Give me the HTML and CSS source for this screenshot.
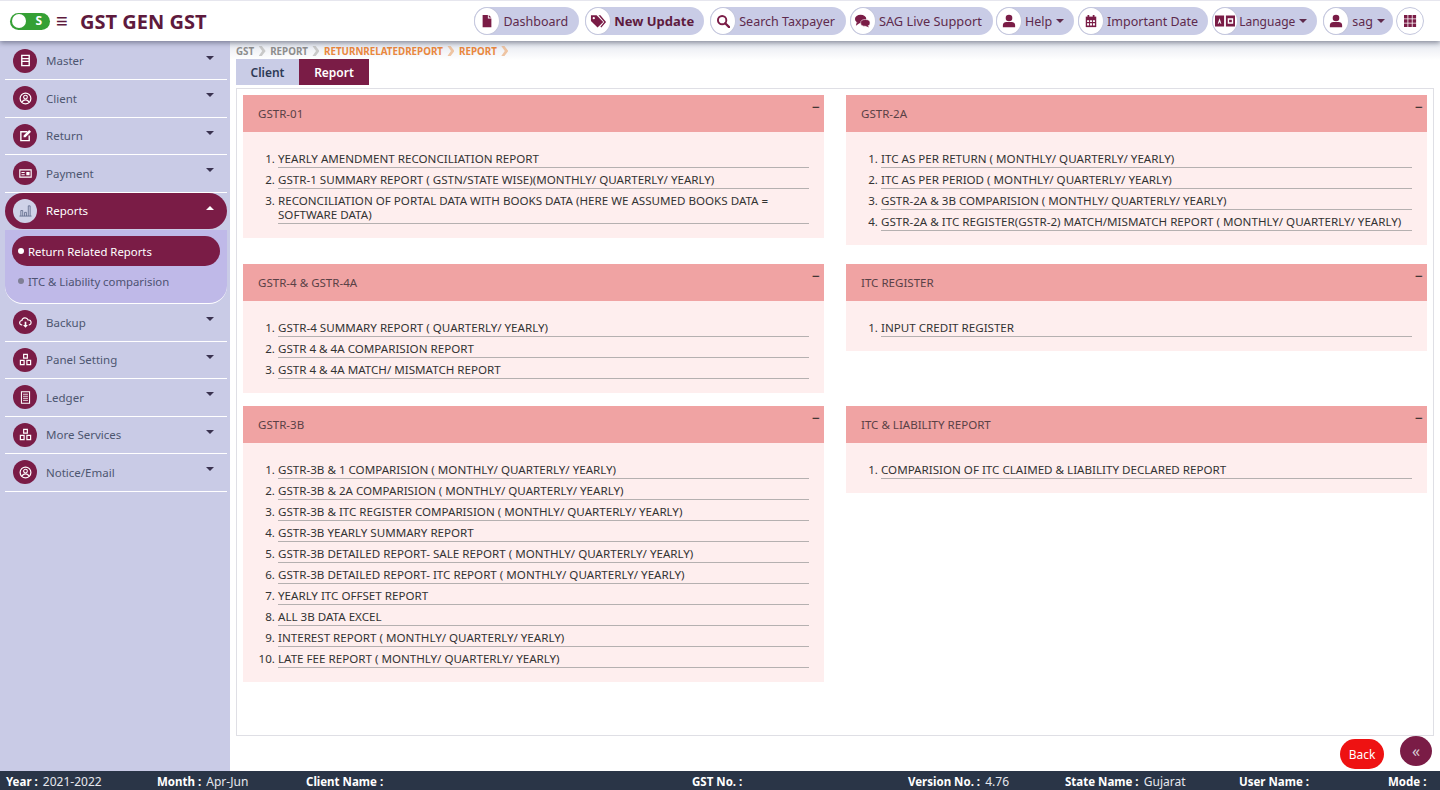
FILE: index.html
```html
<!DOCTYPE html>
<html lang="en">
<head>
<meta charset="utf-8">
<title>GST GEN GST</title>
<link rel="stylesheet" href="styles.css">
</head>
<body>
<svg class="defs" width="0" height="0" aria-hidden="true">
  <symbol id="i-file" viewBox="0 0 16 16"><path fill="currentColor" d="M3 1h6v4h4v10H3z M10 1l3 3h-3z"/></symbol>
  <symbol id="i-tags" viewBox="0 0 18 16"><path fill="currentColor" d="M1 2h6l7 7-6 6-7-7z M9 2h2l6 7-5 6-1-1 4-5z"/><circle cx="4" cy="5" r="1.2" fill="#fff"/></symbol>
  <symbol id="i-search" viewBox="0 0 16 16"><circle cx="7" cy="7" r="4.8" fill="none" stroke="currentColor" stroke-width="2.2"/><path d="M10.5 10.5 15 15" stroke="currentColor" stroke-width="2.6" stroke-linecap="round"/></symbol>
  <symbol id="i-chat" viewBox="0 0 18 16"><ellipse cx="7" cy="6" rx="6" ry="4.5" fill="currentColor"/><path fill="currentColor" d="M3 9 2 13l4-3z"/><ellipse cx="12" cy="10" rx="5" ry="3.6" fill="currentColor" stroke="#fff" stroke-width=".6"/><path fill="currentColor" d="M14 12l2 3-4-2z"/></symbol>
  <symbol id="i-user" viewBox="0 0 16 16"><circle cx="8" cy="4.6" r="3.8" fill="currentColor"/><path fill="currentColor" d="M1 15v-2.5C1 10 3 9 5 9h6c2 0 4 1 4 3.500V15z"/></symbol>
  <symbol id="i-cal" viewBox="0 0 16 16"><path fill="currentColor" d="M2 3h12v12H2z"/><path stroke="currentColor" stroke-width="2" d="M5 1v3M11 1v3"/><path fill="#fff" d="M3.500 7h2.300v2H3.500zM6.900 7h2.200v2H6.900zM10.200 7h2.300v2h-2.300zM3.500 10.500h2.300v2.500H3.500zM6.900 10.500h2.200v2.500H6.900zM10.200 10.500h2.300v2.500h-2.300z"/></symbol>
  <symbol id="i-lang" viewBox="0 0 22 14"><path fill="currentColor" fill-rule="evenodd" d="M0 1h10v12H0zM3 10l2-6 2 6-1 0-.4-1.400H4.400L4 10zM12 1h10v12H12zM14 4v6h6V4zM15.500 5.500h3v3h-3z"/></symbol>
  <symbol id="i-grid" viewBox="0 0 14 14"><path fill="currentColor" d="M1 1h3.500v3.500H1zM5.300 1h3.500v3.500H5.300zM9.600 1h3.500v3.500H9.600zM1 5.300h3.500v3.500H1zM5.300 5.300h3.500v3.500H5.300zM9.600 5.300h3.500v3.500H9.600zM1 9.600h3.500v3.500H1zM5.300 9.600h3.500v3.500H5.300zM9.600 9.600h3.500v3.500H9.600z"/></symbol>
  <symbol id="i-master" viewBox="0 0 14 14"><path fill="none" stroke="currentColor" stroke-width="1.500" d="M3 1.500h8v11H3z"/><path stroke="currentColor" stroke-width="1.300" d="M3 5h8M3 8h8"/></symbol>
  <symbol id="i-client" viewBox="0 0 14 14"><circle cx="7" cy="7" r="5.800" fill="none" stroke="currentColor" stroke-width="1.300"/><circle cx="7" cy="5.500" r="2" fill="none" stroke="currentColor" stroke-width="1.200"/><path fill="none" stroke="currentColor" stroke-width="1.200" d="M3.500 11c.5-2 2-2.500 3.500-2.500s3 .5 3.500 2.500"/></symbol>
  <symbol id="i-return" viewBox="0 0 14 14"><path fill="none" stroke="currentColor" stroke-width="1.500" d="M9 3H2v9.500h9V7"/><path fill="currentColor" d="M5 7l6-6 2 2-6 6H5z"/></symbol>
  <symbol id="i-pay" viewBox="0 0 16 12"><path fill="none" stroke="currentColor" stroke-width="1.400" d="M1 1.500h14v9H1z"/><path fill="currentColor" d="M3 4h4v1.300H3zM3 7h4v1.300H3zM9 4h4v4.300H9z"/></symbol>
  <symbol id="i-chart" viewBox="0 0 14 14"><path fill="none" stroke="currentColor" stroke-width=".9" d="M.5 13h13M2 13V7h2v6M6 13V9h2v4M10 13V2h2v11"/></symbol>
  <symbol id="i-cloud" viewBox="0 0 16 14"><path fill="none" stroke="currentColor" stroke-width="1.400" d="M4 10H3.500a2.700 2.700 0 0 1 0-5.400A4 4 0 0 1 11.200 4 3 3 0 0 1 12.500 10H12"/><path fill="currentColor" d="M7 6h2v4h2l-3 3.500L5 10h2z"/></symbol>
  <symbol id="i-panel" viewBox="0 0 14 14"><g fill="none" stroke="currentColor" stroke-width="1.300"><path d="M5 1.500h4v4H5z"/><path d="M1.500 8h4v4.500h-4z"/><path d="M8.500 8h4v4.500h-4z"/></g></symbol>
  <symbol id="i-ledger" viewBox="0 0 12 16"><path fill="none" stroke="currentColor" stroke-width="1.300" d="M1 1h10v14H1z"/><path stroke="currentColor" d="M3 4h6M3 6.500h6M3 9h6M3 11.500h6"/></symbol>
</svg>

<header class="topbar">
  <div class="brand">
    <span class="toggle"><span class="knob"></span><span class="toggle-s">S</span></span>
    <span class="burger">≡</span>
    <span class="title">GST GEN GST</span>
  </div>
  <nav class="topnav">
    <a class="pill p-dash"><span class="ico"><svg class="s13"><use href="#i-file"/></svg></span>Dashboard</a>
    <a class="pill p-new strong"><span class="ico"><svg class="s16"><use href="#i-tags"/></svg></span>New Update</a>
    <a class="pill p-search"><span class="ico"><svg class="s13"><use href="#i-search"/></svg></span>Search Taxpayer</a>
    <a class="pill p-sag"><span class="ico"><svg class="s16"><use href="#i-chat"/></svg></span>SAG Live Support</a>
    <a class="pill p-help"><span class="ico"><svg class="s13"><use href="#i-user"/></svg></span>Help<i class="caret"></i></a>
    <a class="pill p-date"><span class="ico"><svg class="s13"><use href="#i-cal"/></svg></span>Important Date</a>
    <a class="pill p-lang"><span class="ico"><svg class="s18"><use href="#i-lang"/></svg></span>Language<i class="caret"></i></a>
    <a class="pill p-user"><span class="ico"><svg class="s13"><use href="#i-user"/></svg></span>sag<i class="caret"></i></a>
    <a class="ico solo"><svg class="s13"><use href="#i-grid"/></svg></a>
  </nav>
</header>

<div class="shell">
  <aside class="sidebar">
    <div class="side-item"><span class="badge"><svg class="s12"><use href="#i-master"/></svg></span><span class="side-label">Master</span><i class="tri"></i></div>
    <div class="side-item"><span class="badge"><svg class="s12"><use href="#i-client"/></svg></span><span class="side-label">Client</span><i class="tri"></i></div>
    <div class="side-item"><span class="badge"><svg class="s12"><use href="#i-return"/></svg></span><span class="side-label">Return</span><i class="tri"></i></div>
    <div class="side-item"><span class="badge"><svg class="s12"><use href="#i-pay"/></svg></span><span class="side-label">Payment</span><i class="tri"></i></div>
    <div class="side-item open"><span class="badge"><svg class="s12"><use href="#i-chart"/></svg></span><span class="side-label">Reports</span><i class="tri up"></i></div>
    <div class="submenu">
      <div class="sub active"><i class="dot"></i>Return Related Reports</div>
      <div class="sub"><i class="dot"></i>ITC &amp; Liability comparision</div>
    </div>
    <div class="side-item"><span class="badge"><svg class="s12"><use href="#i-cloud"/></svg></span><span class="side-label">Backup</span><i class="tri"></i></div>
    <div class="side-item"><span class="badge"><svg class="s12"><use href="#i-panel"/></svg></span><span class="side-label">Panel Setting</span><i class="tri"></i></div>
    <div class="side-item"><span class="badge"><svg class="s12"><use href="#i-ledger"/></svg></span><span class="side-label">Ledger</span><i class="tri"></i></div>
    <div class="side-item"><span class="badge"><svg class="s12"><use href="#i-panel"/></svg></span><span class="side-label">More Services</span><i class="tri"></i></div>
    <div class="side-item"><span class="badge"><svg class="s12"><use href="#i-client"/></svg></span><span class="side-label">Notice/Email</span><i class="tri"></i></div>
  </aside>

  <main class="main">
    <div class="crumbs">
      <span>GST</span><i class="chev"></i><span>REPORT</span><i class="chev"></i><span class="hot">RETURNRELATEDREPORT</span><i class="chev"></i><span class="hot">REPORT</span><i class="chev"></i>
    </div>
    <div class="tabs">
      <a class="tab">Client</a>
      <a class="tab current">Report</a>
    </div>
    <div class="board">
      <div class="panel-grid">
        <section class="panel">
          <h3 class="panel-head">GSTR-01<span class="minus">−</span></h3>
          <ol class="panel-list">
            <li>YEARLY AMENDMENT RECONCILIATION REPORT</li>
            <li>GSTR-1 SUMMARY REPORT ( GSTN/STATE WISE)(MONTHLY/ QUARTERLY/ YEARLY)</li>
            <li>RECONCILIATION OF PORTAL DATA WITH BOOKS DATA (HERE WE ASSUMED BOOKS DATA = SOFTWARE DATA)</li>
          </ol>
        </section>
        <section class="panel first-row">
          <h3 class="panel-head">GSTR-2A<span class="minus">−</span></h3>
          <ol class="panel-list">
            <li>ITC AS PER RETURN ( MONTHLY/ QUARTERLY/ YEARLY)</li>
            <li>ITC AS PER PERIOD ( MONTHLY/ QUARTERLY/ YEARLY)</li>
            <li>GSTR-2A &amp; 3B COMPARISION ( MONTHLY/ QUARTERLY/ YEARLY)</li>
            <li>GSTR-2A &amp; ITC REGISTER(GSTR-2) MATCH/MISMATCH REPORT ( MONTHLY/ QUARTERLY/ YEARLY)</li>
          </ol>
        </section>
        <section class="panel">
          <h3 class="panel-head">GSTR-4 &amp; GSTR-4A<span class="minus">−</span></h3>
          <ol class="panel-list">
            <li>GSTR-4 SUMMARY REPORT ( QUARTERLY/ YEARLY)</li>
            <li>GSTR 4 &amp; 4A COMPARISION REPORT</li>
            <li>GSTR 4 &amp; 4A MATCH/ MISMATCH REPORT</li>
          </ol>
        </section>
        <section class="panel">
          <h3 class="panel-head">ITC REGISTER<span class="minus">−</span></h3>
          <ol class="panel-list">
            <li>INPUT CREDIT REGISTER</li>
          </ol>
        </section>
        <section class="panel">
          <h3 class="panel-head">GSTR-3B<span class="minus">−</span></h3>
          <ol class="panel-list">
            <li>GSTR-3B &amp; 1 COMPARISION ( MONTHLY/ QUARTERLY/ YEARLY)</li>
            <li>GSTR-3B &amp; 2A COMPARISION ( MONTHLY/ QUARTERLY/ YEARLY)</li>
            <li>GSTR-3B &amp; ITC REGISTER COMPARISION ( MONTHLY/ QUARTERLY/ YEARLY)</li>
            <li>GSTR-3B YEARLY SUMMARY REPORT</li>
            <li>GSTR-3B DETAILED REPORT- SALE REPORT ( MONTHLY/ QUARTERLY/ YEARLY)</li>
            <li>GSTR-3B DETAILED REPORT- ITC REPORT ( MONTHLY/ QUARTERLY/ YEARLY)</li>
            <li>YEARLY ITC OFFSET REPORT</li>
            <li>ALL 3B DATA EXCEL</li>
            <li>INTEREST REPORT ( MONTHLY/ QUARTERLY/ YEARLY)</li>
            <li>LATE FEE REPORT ( MONTHLY/ QUARTERLY/ YEARLY)</li>
          </ol>
        </section>
        <section class="panel">
          <h3 class="panel-head">ITC &amp; LIABILITY REPORT<span class="minus">−</span></h3>
          <ol class="panel-list">
            <li>COMPARISION OF ITC CLAIMED &amp; LIABILITY DECLARED REPORT</li>
          </ol>
        </section>
      </div>
    </div>
    <div class="actions">
      <a class="back">Back</a>
      <a class="collapse">«</a>
    </div>
  </main>
</div>

<footer class="statusbar">
  <span><b>Year :</b> 2021-2022</span>
  <span><b>Month :</b> Apr-Jun</span>
  <span><b>Client Name :</b></span>
  <span><b>GST No. :</b></span>
  <span><b>Version No. :</b> 4.76</span>
  <span><b>State Name :</b> Gujarat</span>
  <span><b>User Name :</b></span>
  <span><b>Mode :</b></span>
</footer>
</body>
</html>
```
FILE: styles.css
```css
* { box-sizing: border-box; }
html, body { margin: 0; height: 100%; }
body {
  width: 1440px;
  height: 790px;
  overflow: hidden;
  display: flex;
  flex-direction: column;
  font-family: "Noto Sans", "Open Sans", sans-serif;
  background: #fff;
  color: #333;
}
.defs { position: absolute; }
svg { display: block; }
.s12 { width: 13px; height: 13px; }
.s13 { width: 14px; height: 14px; }
.s16 { width: 17px; height: 16px; }
.s18 { width: 20px; height: 14px; }

/* top bar */
.topbar {
  height: 41px;
  flex: none;
  display: flex;
  align-items: center;
  justify-content: space-between;
  padding: 0 16px 0 10px;
  background: #fff;
  border-top: 1px solid #e6e6ee;
  box-shadow: 0 2px 5px rgba(60, 65, 85, .55);
  position: relative;
  z-index: 2;
}
.brand { display: flex; align-items: center; }
.toggle {
  width: 40px;
  height: 17px;
  border-radius: 9px;
  background: #35a035;
  display: flex;
  align-items: center;
  justify-content: space-between;
  padding: 0 8px 0 2px;
}
.knob { width: 14px; height: 14px; border-radius: 50%; background: #fff; }
.toggle-s { color: #fff; font-size: 12px; font-weight: 700; line-height: 1; }
.burger { width: 30px; padding-left: 6px; font-size: 20px; line-height: 1; color: #5e1a3d; }
.title { font-size: 20px; font-weight: 700; color: #5e1a3d; font-family: "Open Sans", sans-serif; }
.topnav { display: flex; align-items: center; }
.pill {
  height: 28px;
  display: flex;
  align-items: center;
  border-radius: 14px;
  background: #c9cce6;
  color: #5e2a4c;
  font-size: 12.500px;
  padding-right: 10px;
  white-space: nowrap;
}
.pill.strong { font-size: 13px; font-weight: 700; color: #5e1a3d; }
.p-new, .p-search, .p-user { margin-left: 6px; }
.p-sag, .p-date, .p-lang { margin-left: 4px; }
.p-help { margin-left: 3px; }
.p-dash, .p-search { padding-right: 11px; }
.p-sag { font-size: 12.800px; padding-right: 11px; }
.p-lang { font-size: 12px; }
.p-user { padding-right: 8px; }
.ico {
  width: 26px;
  height: 28px;
  flex: none;
  display: flex;
  align-items: center;
  justify-content: center;
  margin-right: 3px;
  border-radius: 50%;
  background: #fff;
  border: 1px solid #c4c7dd;
  color: #7a1c46;
}
.p-lang .ico { margin-right: 1px; }
.ico.solo { width: 28px; margin: 0 0 0 3px; }
.caret {
  display: inline-block;
  margin-left: 4px;
  border: 4px solid transparent;
  border-top-color: #5e2a4c;
  border-bottom-width: 0;
}

/* shell */
.shell { flex: 1; display: flex; min-height: 0; }
.sidebar {
  width: 230px;
  flex: none;
  background: #c9cbe6;
  padding: 1.500px 3px 0 5px;
  display: flex;
  flex-direction: column;
}
.side-item {
  height: 37.500px;
  flex: none;
  display: flex;
  align-items: center;
  padding: 0 13px 0 8px;
  border-bottom: 1px solid #fff;
  color: #4d5670;
  font-size: 11.500px;
}
.badge {
  width: 24px;
  height: 24px;
  border-radius: 50%;
  flex: none;
  background: #7a1c46;
  color: #fff;
  display: flex;
  align-items: center;
  justify-content: center;
  margin-right: 9px;
}
.side-label { flex: 1; }
.tri {
  margin-top: -6px;
  border: 4px solid transparent;
  border-top-color: #3a3350;
  border-bottom-width: 0;
}
.tri.up { border-top-width: 0; border-bottom: 4px solid #fff; }
.side-item.open {
  height: 36px;
  background: #7a1c46;
  border: 0;
  border-radius: 18px;
  color: #fff;
}
.open .badge { background: #cfd2e8; color: #5f6a8a; }
.submenu {
  height: 74.500px;
  flex: none;
  margin-top: 1px;
  padding: 6.500px 7px;
  background: #bfb9e8;
  border-radius: 0 0 18px 18px;
  border-bottom: 1px solid #fff;
  font-size: 11.350px;
}
.sub {
  height: 30px;
  display: flex;
  align-items: center;
  padding-left: 6px;
  color: #4d5272;
}
.sub.active { background: #7a1c46; color: #fff; border-radius: 15px; }
.dot { width: 6px; height: 6px; border-radius: 50%; background: #7f7f95; margin-right: 4px; }
.active .dot { background: #fff; }

/* main */
.main {
  flex: 1;
  min-width: 0;
  display: flex;
  flex-direction: column;
  padding: 0 6px 0 6px;
  background: linear-gradient(#e4e7ef 0, #fff 19px);
}
.crumbs {
  height: 18px;
  display: flex;
  align-items: center;
  gap: 4.500px;
  padding-top: 2px;
  font-size: 9.800px;
  font-weight: 700;
  color: #8d8d8d;
}
.hot { color: #e9873e; }
.chev { width: 7px; height: 10px; background: #c9c9c9; clip-path: polygon(0 0, 45% 0, 100% 50%, 45% 100%, 0 100%, 50% 50%); }
.crumbs .hot ~ .chev { background: #eec4a3; }
.tabs { display: flex; height: 26px; flex: none; }
.tab {
  width: 63px;
  display: flex;
  align-items: center;
  justify-content: center;
  background: #c9cce6;
  color: #2d3a55;
  font-size: 12px;
  font-weight: 600;
}
.tab.current { width: 70px; background: #7a1c46; color: #fff; }
.board {
  height: 648px;
  flex: none;
  margin-top: 3px;
  padding: 6px;
  border: 1px solid #dfdfe5;
  background: #fff;
}
.panel-grid {
  display: grid;
  grid-template-columns: 581px 581px;
  column-gap: 22px;
  row-gap: 13px;
  align-items: start;
}
.panel { background: #feeeee; }
.first-row { margin-bottom: 6px; }
.panel-head {
  position: relative;
  height: 37px;
  margin: 0;
  padding: 0 15px;
  display: flex;
  align-items: center;
  background: #f0a3a3;
  color: #5a4146;
  font-size: 11.550px;
  font-weight: 400;
}
.minus { position: absolute; right: 4px; top: 5px; font-size: 14px; line-height: 14px; color: #222; }
.panel-list {
  margin: 0;
  padding: 15px 15px 14px 35px;
  font-size: 11.600px;
  line-height: 14px;
  color: #333;
}
.panel-list li { padding: 5px 0 1px; border-bottom: 1px solid #b5b0b0; }

.actions {
  flex: 1;
  display: flex;
  justify-content: flex-end;
  align-items: flex-start;
  gap: 16px;
  padding-right: 2px;
}
.back {
  width: 44px;
  height: 30px;
  margin-top: 3px;
  border-radius: 15px;
  background: #ee1212;
  color: #fff;
  font-size: 12px;
  display: flex;
  align-items: center;
  justify-content: center;
}
.collapse {
  width: 32px;
  height: 30px;
  border-radius: 50%;
  background: #7a1c46;
  color: #d8cad4;
  font-size: 16px;
  display: flex;
  align-items: center;
  justify-content: center;
}

/* status bar */
.statusbar {
  height: 19px;
  flex: none;
  display: grid;
  grid-template-columns: 151px 149px 386px 216px 157px 174px 149px 1fr;
  align-items: center;
  padding: 1px 0 0 6px;
  background: #2a3547;
  color: #e6e8ee;
  font-size: 12px;
  white-space: nowrap;
}
.statusbar b { color: #fff; margin-right: 2px; font-size: 11.500px; }
```
